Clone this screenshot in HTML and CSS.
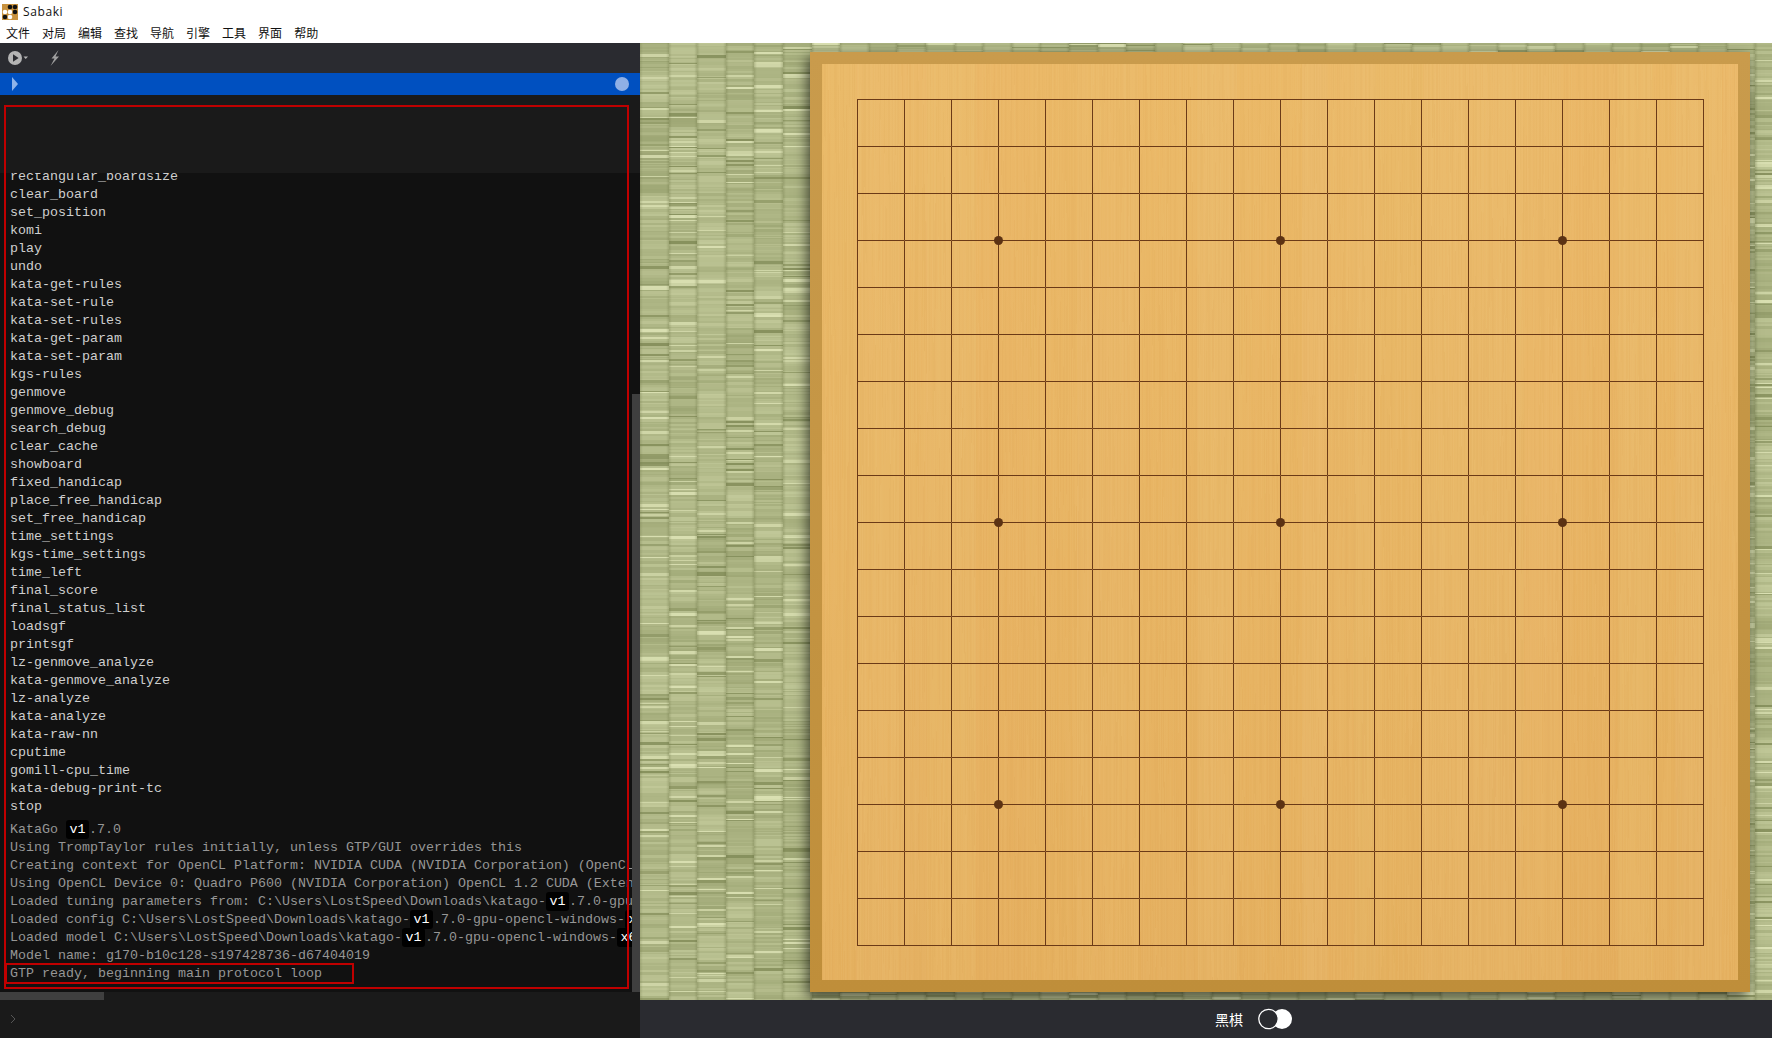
FILE: index.html
```html
<!DOCTYPE html>
<html lang="en">
<head>
  <meta charset="UTF-8">
  <meta name="viewport" content="width=device-width, initial-scale=1.0">
  <title>Sabaki</title>
  <link rel="stylesheet" href="styles.css">
</head>
<body>
  <div class="titlebar">
    <svg class="app-icon" width="16" height="16" viewBox="0 0 16 16">
      <rect width="16" height="16" fill="#c8923f"/>
      <circle cx="8" cy="3" r="2.3" fill="#111"/>
      <circle cx="13" cy="3" r="2.3" fill="#111"/>
      <circle cx="3" cy="8" r="2.3" fill="#fff"/>
      <circle cx="8" cy="8" r="2.3" fill="#fff"/>
      <circle cx="13" cy="8" r="2.3" fill="#111"/>
      <circle cx="3" cy="13" r="2.3" fill="#111"/>
      <circle cx="8" cy="13" r="2.3" fill="#fff"/>
    </svg>
    <span>Sabaki</span>
  </div>
  <div class="menubar">
    <span>文件</span><span>对局</span><span>编辑</span><span>查找</span><span>导航</span><span>引擎</span><span>工具</span><span>界面</span><span>帮助</span>
  </div>

  <div class="main">
    <div class="left">
      <div class="toolbar">
        <svg width="20" height="16" viewBox="0 0 20 16">
          <circle cx="7" cy="8" r="7" fill="#b4b4b4"/>
          <path d="M5 4.2 10.6 8 5 11.8Z" fill="#2a2b30"/>
          <path d="M15.5 6.5h4.5L17.7 9Z" fill="#b4b4b4"/>
        </svg>
        <svg class="bolt" width="12" height="16" viewBox="0 0 12 16">
          <path d="M9.5 0 2.5 8.5 5.5 8.5 1.5 16 10 6.5 6.5 6.5Z" fill="#a0a0a0"/>
        </svg>
      </div>
      <div class="enginebar">
        <svg width="8" height="14" viewBox="0 0 8 14"><path d="M1 0 7 7 1 14Z" fill="#8fb4ea"/></svg>
        <span class="engine-dot"></span>
      </div>

      <div class="console">
        <div class="console-head"></div>
        <div class="log">
          <div class="commands">
            <div>rectangular_boardsize</div>
            <div>clear_board</div>
            <div>set_position</div>
            <div>komi</div>
            <div>play</div>
            <div>undo</div>
            <div>kata-get-rules</div>
            <div>kata-set-rule</div>
            <div>kata-set-rules</div>
            <div>kata-get-param</div>
            <div>kata-set-param</div>
            <div>kgs-rules</div>
            <div>genmove</div>
            <div>genmove_debug</div>
            <div>search_debug</div>
            <div>clear_cache</div>
            <div>showboard</div>
            <div>fixed_handicap</div>
            <div>place_free_handicap</div>
            <div>set_free_handicap</div>
            <div>time_settings</div>
            <div>kgs-time_settings</div>
            <div>time_left</div>
            <div>final_score</div>
            <div>final_status_list</div>
            <div>loadsgf</div>
            <div>printsgf</div>
            <div>lz-genmove_analyze</div>
            <div>kata-genmove_analyze</div>
            <div>lz-analyze</div>
            <div>kata-analyze</div>
            <div>kata-raw-nn</div>
            <div>cputime</div>
            <div>gomill-cpu_time</div>
            <div>kata-debug-print-tc</div>
            <div>stop</div>
          </div>
          <div class="stderr">
            <div>KataGo <b>v1</b>.7.0</div>
            <div>Using TrompTaylor rules initially, unless GTP/GUI overrides this</div>
            <div>Creating context for OpenCL Platform: NVIDIA CUDA (NVIDIA Corporation) (OpenCL 1.2 CUDA 10.2.120)</div>
            <div>Using OpenCL Device 0: Quadro P600 (NVIDIA Corporation) OpenCL 1.2 CUDA (Extensions: cl_khr_global)</div>
            <div>Loaded tuning parameters from: C:\Users\LostSpeed\Downloads\katago-<b>v1</b>.7.0-gpu-opencl-windows-<b>x64</b></div>
            <div>Loaded config C:\Users\LostSpeed\Downloads\katago-<b>v1</b>.7.0-gpu-opencl-windows-<b>x64</b>\gtp_example.cfg</div>
            <div>Loaded model C:\Users\LostSpeed\Downloads\katago-<b>v1</b>.7.0-gpu-opencl-windows-<b>x64</b>\model.bin.gz</div>
            <div>Model name: g170-b10c128-s197428736-d67404019</div>
            <div>GTP ready, beginning main protocol loop</div>
          </div>
        </div>
        <div class="vscroll"></div>
      </div>
      <div class="hscroll"><div class="hscroll-thumb"></div></div>
      <div class="prompt">
        <svg width="6" height="10" viewBox="0 0 6 10"><path d="M1 1 5 5 1 9" fill="none" stroke="#555"/></svg>
      </div>

      <div class="redbox outer"></div>
      <div class="redbox inner"></div>
    </div>

    <div class="right">
      <div class="goban-area">
        <canvas id="tatami" class="tatami" width="1132" height="957"></canvas>
        <div class="board">
          <div class="wood">
            <canvas id="wood" class="grain" width="916" height="916"></canvas>
            <svg class="grid" width="847" height="847" viewBox="0 0 847 847">
              <defs>
                <pattern id="cell" width="47" height="47" patternUnits="userSpaceOnUse">
                  <path d="M.5 47V.5H47" fill="none" stroke="#6b3a17"/>
                </pattern>
              </defs>
              <rect x=".5" y=".5" width="846" height="846" fill="url(#cell)" stroke="#6b3a17"/>
              <g fill="#5c3213">
                <circle cx="141.5" cy="141.5" r="4.5"/>
                <circle cx="423.5" cy="141.5" r="4.5"/>
                <circle cx="705.5" cy="141.5" r="4.5"/>
                <circle cx="141.5" cy="423.5" r="4.5"/>
                <circle cx="423.5" cy="423.5" r="4.5"/>
                <circle cx="705.5" cy="423.5" r="4.5"/>
                <circle cx="141.5" cy="705.5" r="4.5"/>
                <circle cx="423.5" cy="705.5" r="4.5"/>
                <circle cx="705.5" cy="705.5" r="4.5"/>
              </g>
            </svg>
          </div>
        </div>
      </div>
      <div class="statusbar">
        <span class="player">黑棋</span>
        <svg width="34" height="22" viewBox="0 0 34 22">
          <circle cx="24" cy="11" r="10" fill="#fff"/>
          <circle cx="10.5" cy="11" r="9.7" fill="#2a2b30" stroke="#fff" stroke-width="1.3"/>
        </svg>
      </div>
    </div>
  </div>

  <script src="textures.js"></script>
</body>
</html>
```

FILE: styles.css
```css
html, body {
  height: 100%;
}
body {
  margin: 0;
  display: flex;
  flex-direction: column;
  overflow: hidden;
  background: #fff;
  font-family: 'Noto Sans CJK SC', sans-serif;
}
.titlebar {
  height: 22px;
  flex: none;
  display: flex;
  align-items: center;
  padding-left: 2px;
  font-family: 'Open Sans', sans-serif;
  font-size: 12px;
  letter-spacing: 0.6px;
  color: #111;
}
.app-icon {
  margin-right: 5px;
  margin-top: 2px;
}
.menubar {
  height: 21px;
  flex: none;
  display: flex;
  align-items: center;
  gap: 12px;
  padding-left: 6px;
  font-size: 12px;
  color: #111;
}
.main {
  flex: 1;
  display: flex;
  min-height: 0;
}

/* left: engine console */
.left {
  position: relative;
  width: 640px;
  flex: none;
  display: flex;
  flex-direction: column;
  background: #1a1a1a;
}
.toolbar {
  height: 30px;
  flex: none;
  display: flex;
  align-items: center;
  gap: 21px;
  padding-left: 8px;
  background: #2a2b30;
}
.enginebar {
  height: 22px;
  flex: none;
  display: flex;
  align-items: center;
  justify-content: space-between;
  padding: 0 11px;
  background: #0050c0;
}
.engine-dot {
  width: 14px;
  height: 14px;
  border-radius: 50%;
  background: #8fb0e6;
}
.console {
  position: relative;
  flex: 1;
  min-height: 0;
  display: flex;
  flex-direction: column;
  background: #111;
}
.console-head {
  position: relative;
  z-index: 1;
  height: 78px;
  flex: none;
  background: #1a1a1a;
}
.log {
  flex: 1;
  min-height: 0;
  overflow: hidden;
  display: flex;
  flex-direction: column;
  justify-content: flex-end;
  padding: 0 8px 9px 10px;
  font-family: 'Liberation Mono', monospace;
  font-size: 13.33px;
  line-height: 18px;
}
.commands, .stderr {
  flex: none;
}
.commands > div, .stderr > div {
  white-space: pre;
}
.commands {
  color: #cfcfcf;
  margin-bottom: 5px;
}
.stderr {
  color: #969696;
}
.stderr b {
  font-weight: normal;
  color: #fff;
  background: #000;
  border-radius: 3px;
  padding: 2px 3.5px;
}
.vscroll {
  position: absolute;
  right: 0;
  bottom: 0;
  width: 8px;
  height: 598px;
  background: #3f3f3f;
}
.hscroll {
  height: 8px;
  flex: none;
  background: #1a1a1a;
}
.hscroll-thumb {
  width: 104px;
  height: 100%;
  background: #3f3f3f;
}
.prompt {
  height: 38px;
  flex: none;
  display: flex;
  align-items: center;
  padding-left: 10px;
}

/* red marks drawn over the screenshot */
.redbox {
  position: absolute;
  box-sizing: border-box;
  border: 2px solid #c00000;
  z-index: 2;
}
.redbox.outer {
  left: 4px;
  top: 62px;
  width: 625px;
  height: 884px;
}
.redbox.inner {
  left: 5px;
  top: 920px;
  width: 349px;
  height: 21px;
}

/* right: board */
.right {
  flex: 1;
  display: flex;
  flex-direction: column;
  min-width: 0;
}
.goban-area {
  position: relative;
  flex: 1;
  min-height: 0;
  display: flex;
  justify-content: flex-end;
  align-items: flex-start;
  padding: 9px 22px 0 0;
  overflow: hidden;
  background: #b4bc8c;
}
.tatami {
  position: absolute;
  left: 0;
  top: 0;
}
.board {
  position: relative;
  width: 940px;
  height: 940px;
  box-sizing: border-box;
  padding: 12px;
  background: linear-gradient(#c99b4c, #bf8e3a);
  box-shadow: -3px 5px 12px rgba(0, 0, 0, 0.6);
}
.wood {
  position: relative;
  width: 916px;
  height: 916px;
  background: #e6b261;
}
.grain {
  position: absolute;
  left: 0;
  top: 0;
}
.grid {
  position: absolute;
  left: 35px;
  top: 35px;
}
.statusbar {
  height: 38px;
  flex: none;
  display: flex;
  align-items: center;
  padding-left: 575px;
  gap: 15px;
  background: #2a2b30;
  color: #fff;
  font-size: 14px;
}
```

FILE: textures.js
```js
// Small seeded random so the textures come out the same every time
let seed = 20;
function rnd() {
  seed = (seed * 16807) % 2147483647;
  return (seed - 1) / 2147483646;
}

function mix(a, b, t) {
  return a.map((v, i) => Math.round(v + (b[i] - v) * t));
}

// Tatami mat: columns about 29px wide, each with its own thin horizontal straws
function drawTatami() {
  const canvas = document.getElementById('tatami');
  const ctx = canvas.getContext('2d');
  const dark = [126, 136, 84];
  const light = [218, 224, 178];
  const colWidth = 28.6;

  for (let c = 0; c * colWidth < canvas.width; c++) {
    const x = Math.round(c * colWidth);
    const w = Math.round((c + 1) * colWidth) - x;
    let y = 0;
    let blockEnd = 0;
    let tone = 0.5;
    while (y < canvas.height) {
      if (y >= blockEnd) {
        tone = 0.45 + rnd() * 0.18;
        blockEnd = y + 10 + rnd() * 24;
      }
      const h = 1 + Math.floor(rnd() * 2.4);
      let t = tone + (rnd() - 0.5) * 0.24;
      if (rnd() < 0.07) t = 0.1 + rnd() * 0.2;
      if (rnd() < 0.08) t = 0.82 + rnd() * 0.18;
      const col = mix(dark, light, Math.max(0, Math.min(1, t)));
      ctx.fillStyle = `rgb(${col})`;
      ctx.fillRect(x, y, w, h);
      y += h;
    }

    // soft shade where two columns meet
    const edge = ctx.createLinearGradient(x, 0, x + w, 0);
    edge.addColorStop(0, 'rgba(110,118,70,0.3)');
    edge.addColorStop(0.1, 'rgba(110,118,70,0)');
    edge.addColorStop(0.9, 'rgba(110,118,70,0)');
    edge.addColorStop(1, 'rgba(110,118,70,0.3)');
    ctx.fillStyle = edge;
    ctx.fillRect(x, 0, w, canvas.height);
  }
}

// Board wood: broad pale bands, then fine vertical grain
function drawWood() {
  const canvas = document.getElementById('wood');
  const ctx = canvas.getContext('2d');
  const grad = ctx.createLinearGradient(0, 0, 0, canvas.height);
  grad.addColorStop(0, '#ebb968');
  grad.addColorStop(1, '#e5b05f');
  ctx.fillStyle = grad;
  ctx.fillRect(0, 0, canvas.width, canvas.height);

  for (let x = 0; x < canvas.width;) {
    const w = 15 + rnd() * 50;
    ctx.fillStyle = `rgba(240,205,140,${rnd() * 0.14})`;
    ctx.fillRect(x, 0, w, canvas.height);
    x += w;
  }

  for (let x = 0; x < canvas.width; x++) {
    let y = -Math.floor(rnd() * 80);
    while (y < canvas.height) {
      const h = 30 + rnd() * 160;
      const a = rnd() * 0.05;
      ctx.fillStyle = rnd() < 0.45 ? `rgba(200,130,50,${a})` : `rgba(255,225,160,${a})`;
      ctx.fillRect(x, y, 1, h);
      y += h;
    }
  }
}

drawTatami();
drawWood();
```
